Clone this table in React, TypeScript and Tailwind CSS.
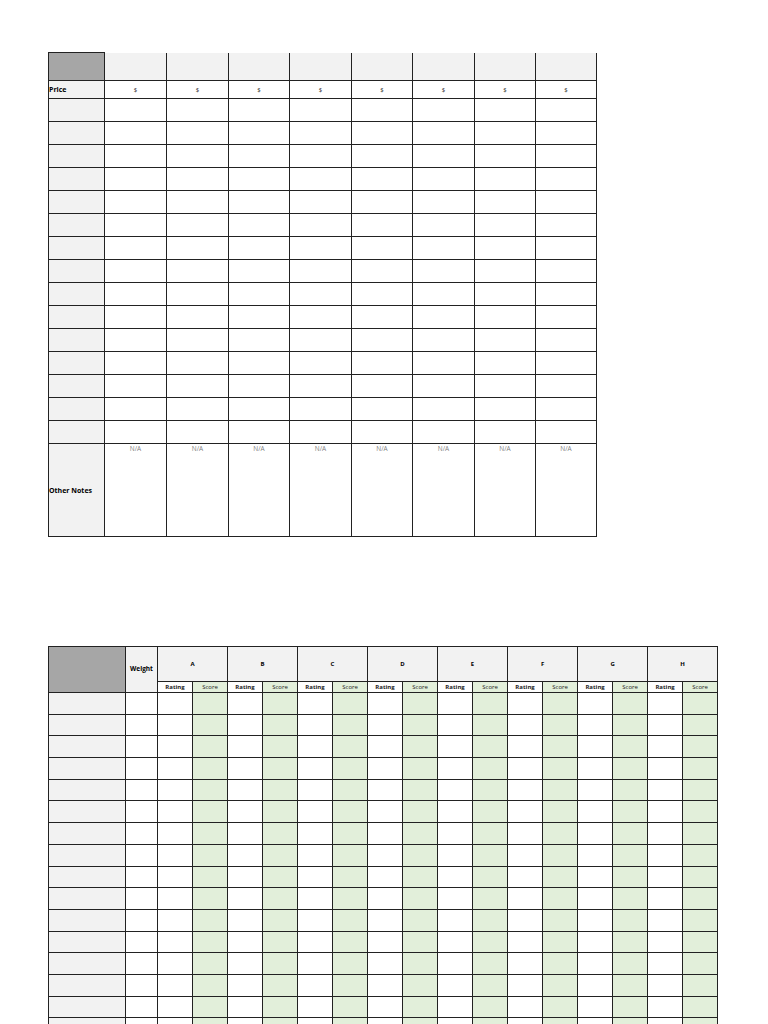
import React from "react"

const cols1 = [62, 62, 61, 62, 61, 62, 61, 61]
const groups = ["A", "B", "C", "D", "E", "F", "G", "H"]

function PriceTable() {
  return (
    <table className="table-fixed border-collapse" style={{ width: 548 }}>
      <colgroup>
        <col style={{ width: 56 }} />
        {cols1.map((w, i) => (
          <col key={i} style={{ width: w }} />
        ))}
      </colgroup>
      <tbody>
        <tr className="h-[28px]">
          <td className="border border-[#222] bg-[#a6a6a6] p-0" />
          {cols1.map((_, i) => (
            <td key={i} className="border-x border-b border-[#222] bg-[#f2f2f2] p-0" />
          ))}
        </tr>
        <tr className="h-[18px]">
          <td className="border border-[#222] bg-[#f2f2f2] p-0 text-left align-middle text-[7px] font-bold leading-none text-black">
            Price
          </td>
          {cols1.map((_, i) => (
            <td key={i} className="border border-[#222] bg-white p-0 text-center align-middle text-[6px] leading-none text-[#333]">
              $
            </td>
          ))}
        </tr>
        {Array.from({ length: 15 }).map((_, r) => (
          <tr key={r} className="h-[23px]">
            <td className="border border-[#222] bg-[#f2f2f2] p-0" />
            {cols1.map((_, i) => (
              <td key={i} className="border border-[#222] bg-white p-0" />
            ))}
          </tr>
        ))}
        <tr className="h-[93px]">
          <td className="border border-[#222] bg-[#f2f2f2] p-0 text-left align-middle text-[7px] font-bold leading-none text-black">
            Other Notes
          </td>
          {cols1.map((_, i) => (
            <td key={i} className="border border-[#222] bg-white p-0 pt-[2px] text-center align-top text-[6.5px] leading-none text-[#7f7f7f]">
              N/A
            </td>
          ))}
        </tr>
      </tbody>
    </table>
  )
}

function ScoreTable() {
  return (
    <table className="table-fixed border-collapse" style={{ width: 669 }}>
      <colgroup>
        <col style={{ width: 77 }} />
        <col style={{ width: 32 }} />
        {groups.map((g) => (
          <React.Fragment key={g}>
            <col style={{ width: 35 }} />
            <col style={{ width: 35 }} />
          </React.Fragment>
        ))}
      </colgroup>
      <tbody>
        <tr className="h-[35px]">
          <td rowSpan={2} className="border border-[#222] bg-[#a6a6a6] p-0" />
          <td rowSpan={2} className="border border-[#222] bg-[#f2f2f2] p-0 text-center align-middle text-[6.5px] font-bold leading-none text-black">
            Weight
          </td>
          {groups.map((g) => (
            <td key={g} colSpan={2} className="border border-[#222] bg-[#f2f2f2] p-0 text-center align-middle text-[6px] font-bold leading-none text-black">
              {g}
            </td>
          ))}
        </tr>
        <tr className="h-[11px]">
          {groups.map((g) => (
            <React.Fragment key={g}>
              <td className="border border-[#222] bg-white p-0 text-center align-middle text-[6px] font-bold leading-none text-[#222]">
                Rating
              </td>
              <td className="border border-[#222] bg-[#e2efda] p-0 text-center align-middle text-[6px] leading-none text-[#222]">
                Score
              </td>
            </React.Fragment>
          ))}
        </tr>
        {Array.from({ length: 16 }).map((_, r) => (
          <tr key={r} className="h-[21.7px]">
            <td className="border border-[#222] bg-[#f2f2f2] p-0" />
            <td className="border border-[#222] bg-white p-0" />
            {groups.map((g) => (
              <React.Fragment key={g}>
                <td className="border border-[#222] bg-white p-0" />
                <td className="border border-[#222] bg-[#e2efda] p-0" />
              </React.Fragment>
            ))}
          </tr>
        ))}
      </tbody>
    </table>
  )
}

export default function App() {
  return (
    <div className="relative h-[1024px] w-[768px] overflow-hidden bg-white" style={{ fontFamily: '"Open Sans", "Liberation Sans", sans-serif' }}>
      <div className="pl-[48px] pt-[52px]">
        <PriceTable />
      </div>
      <div className="pl-[48px] pt-[109px]">
        <ScoreTable />
      </div>
    </div>
  )
}
